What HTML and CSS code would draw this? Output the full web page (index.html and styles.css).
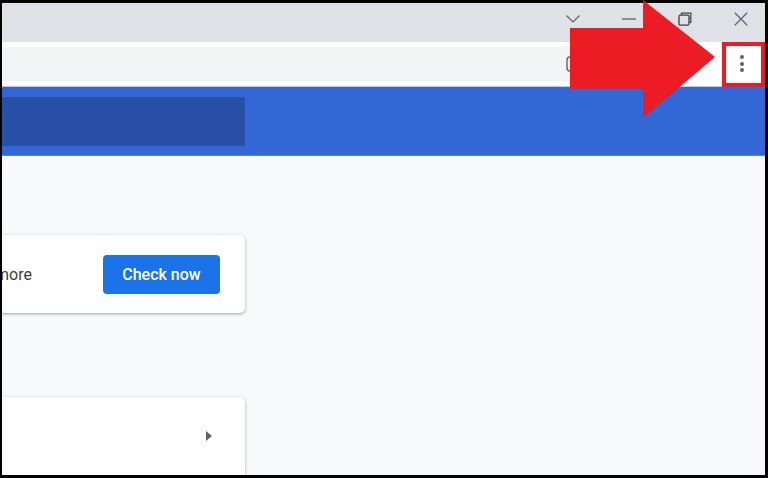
FILE: index.html
```html
<!DOCTYPE html>
<html>
<head>
    <title>Settings</title>
    <link rel="stylesheet" href="styles.css">
</head>
<body>
    <div class="frame">
        <!-- Tab strip -->
        <div class="tabstrip">
            <button class="win-btn tab-search">
                <svg width="16" height="10" viewBox="0 0 16 10"><path d="M1.5 1.5 8 8l6.500-6.500" fill="none" stroke="#5f6368" stroke-width="1.2"/></svg>
            </button>
            <button class="win-btn minimize">
                <svg width="14" height="2" viewBox="0 0 14 2"><path d="M0 1h14" stroke="#5f6368" stroke-width="1.3"/></svg>
            </button>
            <button class="win-btn restore">
                <svg width="14" height="14" viewBox="0 0 14 14"><path d="M3.500 3V1.200h9.300v9.300H11" fill="none" stroke="#3c4043" stroke-width="1.200"/><rect x="1" y="3.200" width="10" height="10" rx="1.500" fill="none" stroke="#3c4043" stroke-width="1.300"/></svg>
            </button>
            <button class="win-btn close">
                <svg width="14" height="14" viewBox="0 0 14 14"><path d="M.8.8l12.400 12.400M13.200.8.8 13.200" fill="none" stroke="#5f6368" stroke-width="1.300"/></svg>
            </button>
        </div>

        <!-- Toolbar -->
        <div class="toolbar">
            <div class="omnibox">
                <svg class="omni-icon" width="16" height="16" viewBox="0 0 16 16"><rect x="1" y="1" width="14" height="14" rx="3" fill="none" stroke="#5f6368" stroke-width="1.4"/></svg>
            </div>
            <div class="menu-btn">
                <span class="dot"></span>
                <span class="dot"></span>
                <span class="dot"></span>
            </div>
        </div>

        <!-- Settings header -->
        <div class="header">
            <div class="search-box"></div>
        </div>

        <!-- Settings content -->
        <div class="content">
            <div class="card check-card">
                <span class="learn">Learn more</span>
                <button class="check-btn">Check now</button>
            </div>
            <div class="card row-card">
                <span class="arrow-right"></span>
            </div>
        </div>
    </div>

    <svg class="callout" width="146" height="119" viewBox="0 0 146 119"><path d="M0 28H73V0L145 57 73 118V89H0Z" fill="#ed1c24"/></svg>
</body>
</html>
```

FILE: styles.css
```css
html, body { margin: 0; padding: 0; }
body { position: relative; width: 768px; height: 478px; overflow: hidden; font-family: Roboto, "Liberation Sans", sans-serif; }
button { border: none; padding: 0; background: none; font-family: inherit; }

.frame { box-sizing: border-box; width: 768px; height: 478px; border: solid #000; border-width: 3px 3px 3px 2px; overflow: hidden; background: #f8f9fa; display: flex; flex-direction: column; }

.tabstrip { box-sizing: border-box; flex: none; height: 39px; padding: 0 17px 8px 0; background: #dee1e6; display: flex; align-items: center; justify-content: flex-end; gap: 42px; }
.win-btn { display: flex; align-items: center; justify-content: center; width: 14px; height: 14px; }
.win-btn svg { flex: none; }

.toolbar { flex: none; height: 44px; background: #fff; border-bottom: 1px solid #c4c6c8; display: flex; align-items: center; }
.omnibox { flex: 1; height: 34px; background: #f1f3f4; border-radius: 0 17px 17px 0; margin-right: 82px; display: flex; align-items: center; justify-content: flex-end; padding-right: 58px; }
.menu-btn { box-sizing: border-box; flex: none; width: 43px; height: 45px; margin-bottom: -1px; padding: 0 3px 2px 0; border: 4px solid #ed1c24; background: #fff; display: flex; flex-direction: column; align-items: center; justify-content: center; gap: 2.7px; }
.dot { width: 4px; height: 4px; border-radius: 50%; background: #5f6368; }

.header { flex: none; height: 68px; background: #3367d6; border-bottom: 1px solid #5b86df; margin-bottom: -1px; display: flex; align-items: center; }
.search-box { width: 243px; height: 49px; background: #2850a7; border-radius: 0 2px 2px 0; }

.content { flex: 1; width: 243px; padding-top: 80px; display: flex; flex-direction: column; gap: 84px; }
.card { background: #fff; border-radius: 0 5px 5px 0; box-shadow: 0 1px 2px rgba(60,64,67,.3), 0 1px 3px 1px rgba(60,64,67,.15); flex: none; }
.check-card { height: 78px; display: flex; align-items: center; justify-content: flex-end; padding-right: 25px; overflow: hidden; }
.learn { flex: none; font-size: 16px; color: #3c4043; margin-right: 71px; }
.check-btn { box-sizing: border-box; flex: none; width: 117px; height: 39px; padding-top: 1px; background: #1a73e8; color: #fff; font-size: 16px; font-weight: 500; border-radius: 4px; }
.row-card { height: 90px; display: flex; align-items: flex-start; justify-content: flex-end; padding-right: 33px; }
.arrow-right { margin-top: 34px; width: 0; height: 0; border-style: solid; border-width: 5.5px 0 5.5px 6px; border-color: transparent transparent transparent #5f6368; }

.callout { position: absolute; left: 570px; top: 0; }
```
